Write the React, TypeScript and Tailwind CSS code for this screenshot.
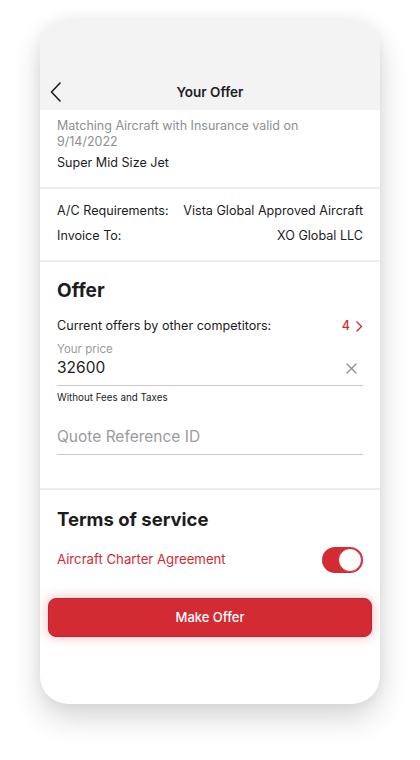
import { useState } from 'react'

function BackIcon() {
  return (
    <svg width="12" height="20" viewBox="0 0 12 20" fill="none" stroke="#1c1c1e" strokeWidth="1.6" strokeLinecap="round" strokeLinejoin="round">
      <path d="M10 1L1.5 10L10 19" />
    </svg>
  )
}

function Toggle({ on, onChange }: { on: boolean; onChange: () => void }) {
  return (
    <button
      onClick={onChange}
      className={`w-[41px] h-[26px] rounded-full p-[1px] flex items-center ${
        on ? 'bg-[#d22b33] justify-end' : 'bg-[#e5e5ea] justify-start'
      }`}
      aria-label="Aircraft Charter Agreement"
    >
      <span className="w-[24px] h-[24px] rounded-full bg-white border-[1.5px] border-[#d22b33]" />
    </button>
  )
}

export default function App() {
  const [price, setPrice] = useState('32600')
  const [agreed, setAgreed] = useState(true)

  return (
    <div className="w-[420px] h-[760px] bg-white flex justify-center font-['Inter',sans-serif] text-[#1c1c1e]">
      <div className="mt-[20px] w-[340px] h-[684px] rounded-[28px] overflow-hidden bg-white shadow-[0_14px_30px_rgba(0,0,0,0.16),0_0_14px_rgba(0,0,0,0.06)] flex flex-col">
        {/* Header */}
        <div className="h-[90px] shrink-0 bg-[#f2f3f2] flex items-end">
          <div className="h-[36px] w-full flex items-center relative px-[10px]">
            <BackIcon />
            <h1 className="absolute inset-x-0 text-center text-[13.5px] font-semibold pointer-events-none">Your Offer</h1>
          </div>
        </div>

        <div className="flex-1 flex flex-col">
          {/* Aircraft */}
          <div className="px-[17px] pt-[8px] pb-[15px]">
            <p className="text-[12.5px] leading-[16px] text-[#8e8e93]">
              Matching Aircraft with Insurance valid on
              <br />
              9/14/2022
            </p>
            <p className="mt-[4px] text-[12.6px] leading-[18px]">Super Mid Size Jet</p>
          </div>
          <div className="h-[2px] bg-[#ededed]" />

          {/* Requirements */}
          <div className="px-[17px] pt-[12px] pb-[14px] flex flex-col gap-[5px] text-[12.6px] leading-[20px]">
            <div className="flex justify-between">
              <span>A/C Requirements:</span>
              <span>Vista Global Approved Aircraft</span>
            </div>
            <div className="flex justify-between">
              <span>Invoice To:</span>
              <span>XO Global LLC</span>
            </div>
          </div>
          <div className="h-[2px] bg-[#ededed]" />

          {/* Offer */}
          <div className="px-[17px] pt-[16px] pb-[33px]">
            <h2 className="text-[19px] leading-[26px] font-bold">Offer</h2>
            <div className="mt-[12px] flex items-center justify-between text-[12.6px] leading-[20px]">
              <span>Current offers by other competitors:</span>
              <span className="flex items-center gap-[6px] text-[#d22b33] font-medium">
                4
                <svg width="7" height="11" viewBox="0 0 7 11" fill="none" stroke="#d22b33" strokeWidth="1.4" strokeLinecap="round" strokeLinejoin="round">
                  <path d="M1 1l4.5 4.5L1 10" />
                </svg>
              </span>
            </div>
            <div className="mt-[5px] border-b border-[#c8c8c8] pb-[6px]">
              <p className="text-[11.5px] leading-[16px] text-[#9a9a9e]">Your price</p>
              <div className="flex items-center justify-between">
                <input
                  value={price}
                  onChange={(e) => setPrice(e.target.value)}
                  className="w-full text-[15.5px] leading-[22px] outline-none bg-transparent"
                />
                <button onClick={() => setPrice('')} className="mr-[6px] text-[#8e8e93]" aria-label="Clear">
                  <svg width="11" height="11" viewBox="0 0 11 11" fill="none" stroke="currentColor" strokeWidth="1.3" strokeLinecap="round">
                    <path d="M1 1l9 9M10 1l-9 9" />
                  </svg>
                </button>
              </div>
            </div>
            <p className="mt-[6px] text-[9.8px] leading-[12px]">Without Fees and Taxes</p>
            <div className="mt-[20px] border-b border-[#c8c8c8] pb-[6px]">
              <input
                placeholder="Quote Reference ID"
                className="w-full text-[15.5px] leading-[22px] outline-none bg-transparent placeholder:text-[#9a9a9e]"
              />
            </div>
          </div>
          <div className="h-[2px] bg-[#ededed]" />

          {/* Terms */}
          <div className="px-[17px] pt-[16px]">
            <h2 className="text-[18.5px] leading-[26px] font-bold">Terms of service</h2>
            <div className="mt-[15px] flex items-center justify-between">
              <span className="text-[13.2px] text-[#d22b33]">Aircraft Charter Agreement</span>
              <Toggle on={agreed} onChange={() => setAgreed(!agreed)} />
            </div>
          </div>

          <div className="px-[8px] mt-[25px]">
            <button className="w-full h-[39px] rounded-[8px] bg-[#d32b34] border border-[#c4222b] text-white text-[13px] font-medium shadow-[0_0_12px_rgba(220,50,60,0.35)]">
              Make Offer
            </button>
          </div>
        </div>
      </div>
    </div>
  )
}
